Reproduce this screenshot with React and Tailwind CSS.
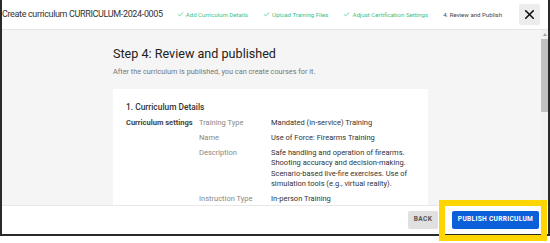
import { Check, X } from "lucide-react";

const steps = ["Add Curriculum Details", "Upload Training Files", "Adjust Certification Settings"];

const rows = [
  { label: "Training Type", value: ["Mandated (in-service) Training"] },
  { label: "Name", value: ["Use of Force: Firearms Training"] },
  {
    label: "Description",
    value: [
      "Safe handling and operation of firearms.",
      "Shooting accuracy and decision-making.",
      "Scenario-based live-fire exercises. Use of",
      "simulation tools (e.g., virtual reality).",
    ],
  },
  { label: "Instruction Type", value: ["In-person Training"] },
];

export default function App() {
  return (
    <div className="relative h-[243px] w-[550px] overflow-hidden bg-white font-['Roboto',sans-serif]">
      <div className="flex h-[236px] flex-col border-x-2 border-b-2 border-[#2a2a2a]">
        {/* header */}
        <div className="flex h-[30px] shrink-0 items-center whitespace-nowrap border-b border-[#e6e6e6] bg-white pr-[8px]">
          <span className="shrink-0 text-[9px] tracking-[-0.35px] text-[#333]">
            Create curriculum CURRICULUM-2024-0005
          </span>
          <div className="ml-[14px] flex shrink-0 items-center gap-[15px] text-[6.1px]">
            {steps.map((s) => (
              <span key={s} className="flex items-center gap-[2px] text-[#3cbf86]">
                <Check size={7} strokeWidth={2.5} />
                {s}
              </span>
            ))}
            <span className="text-[#444]">4. Review and Publish</span>
          </div>
          <button className="ml-auto flex h-[21px] w-[21px] shrink-0 items-center justify-center rounded-[2px] bg-[#ececec]">
            <X size={15} strokeWidth={2.6} className="text-[#111]" />
          </button>
        </div>

        {/* body */}
        <div className="flex min-h-0 flex-1">
          <div className="min-w-0 flex-1 overflow-hidden bg-[#f5f5f5] pl-[111px] pt-[15px]">
            <h1 className="text-[12.6px] leading-[18px] text-[#222]">Step 4: Review and published</h1>
            <p className="mt-[4px] text-[7.3px] text-[#777]">
              After the curriculum is published, you can create courses for it.
            </p>
            <div className="mt-[11px] w-[315px] bg-white px-[13px] pt-[12px] pb-[20px]">
              <h2 className="text-[8.4px] font-medium text-[#333]">1. Curriculum Details</h2>
              <div className="mt-[4px] flex text-[7.5px] leading-[10.5px]">
                <div className="w-[73px] shrink-0 font-bold text-[#444]">Curriculum settings</div>
                <div className="flex flex-col gap-[4.5px]">
                  {rows.map((r) => (
                    <div key={r.label} className="flex">
                      <div className="w-[72px] shrink-0 text-[#888]">{r.label}</div>
                      <div className="text-[#333]">
                        {r.value.map((v) => (
                          <div key={v}>{v}</div>
                        ))}
                      </div>
                    </div>
                  ))}
                </div>
              </div>
            </div>
          </div>
          {/* scrollbar */}
          <div className="flex w-[7px] shrink-0 flex-col items-center bg-[#f1f1f1]">
            <div className="mt-[3px] h-0 w-0 border-x-[2.5px] border-b-[3px] border-x-transparent border-b-[#a3a3a3]" />
            <div className="mt-[3px] h-[73px] w-[7px] bg-[#c1c1c1]" />
          </div>
        </div>

        {/* footer */}
        <div className="flex h-[29px] shrink-0 items-center justify-end gap-[14px] border-t border-[#e8e8e8] bg-white pr-[9px]">
          <button className="h-[18px] w-[30px] rounded-[2px] bg-[#e0e0e0] text-[6.6px] font-bold tracking-[0.3px] text-[#555]">
            BACK
          </button>
          <button className="h-[18px] w-[87px] rounded-[2px] bg-[#0b5fd8] text-[6.6px] font-bold tracking-[0.3px] text-white">
            PUBLISH CURRICULUM
          </button>
        </div>
      </div>

      {/* highlight */}
      <div className="absolute left-[439px] top-[200px] h-[41px] w-[108px] border-[6px] border-[#ffd500]" />
    </div>
  );
}
